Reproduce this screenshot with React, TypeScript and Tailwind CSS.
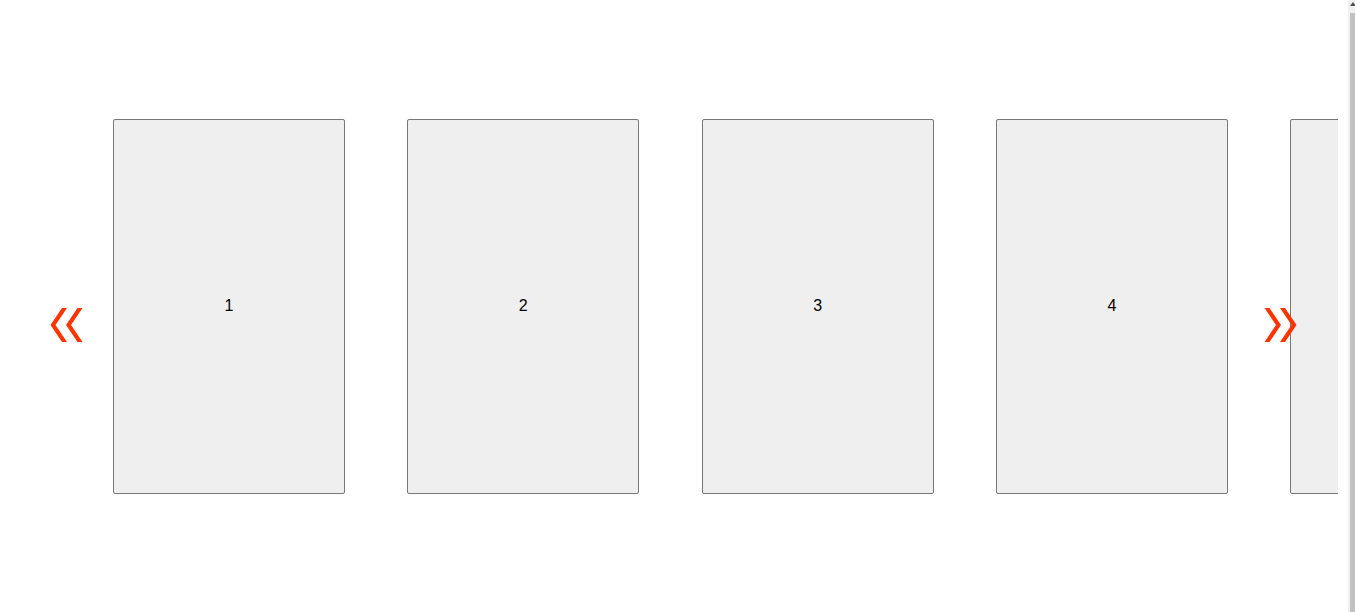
const cards = [1, 2, 3, 4, 5];

function Chevrons({ dir }: { dir: 'left' | 'right' }) {
  return (
    <svg width="36" height="36" viewBox="0 0 36 36" className={dir === 'right' ? 'scale-x-[-1]' : ''}>
      <polygon points="12,1 0.5,18 12,35 17,35 5.5,18 17,1" fill="#ff3300" />
      <polygon points="27.5,1 16,18 27.5,35 32.5,35 21,18 32.5,1" fill="#ff3300" />
    </svg>
  );
}

export default function App() {
  return (
    <div className="flex h-[612px] overflow-hidden bg-white" style={{ fontFamily: '"Liberation Sans", Arial, sans-serif' }}>
      <div className="w-[1348px] shrink-0">
        <div className="relative w-[1338px] overflow-hidden pt-[119px]">
          <div className="flex gap-[62.3px] pl-[113px]">
            {cards.map((n) => (
              <div
                key={n}
                className="flex h-[375px] w-[232px] shrink-0 items-center justify-center rounded-[2px] border border-[#777777] bg-[#efefef] pb-[2px] text-[16px] text-black"
              >
                {n}
              </div>
            ))}
          </div>
          <button type="button" className="absolute left-[50px] top-[307px]">
            <Chevrons dir="left" />
          </button>
          <button type="button" className="absolute left-[1261px] top-[307px]">
            <Chevrons dir="right" />
          </button>
        </div>
      </div>
      <div className="flex w-[7px] shrink-0 flex-col bg-[#f1f1f1] pl-[2px]">
        <div className="flex h-[13px] items-start justify-center pt-[2px]">
          <div className="h-0 w-0 border-x-[3px] border-b-[4px] border-x-transparent border-b-[#505050]" />
        </div>
        <div className="flex-1 bg-[#c1c1c1]" />
      </div>
    </div>
  );
}
